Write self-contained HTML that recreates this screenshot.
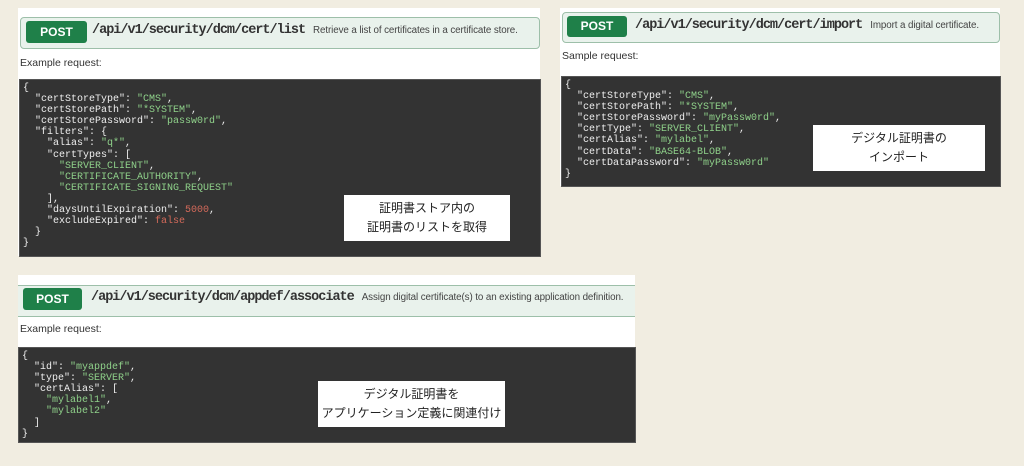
<!DOCTYPE html>
<html><head><meta charset="utf-8"><style>
body{margin:0;width:1024px;height:466px;background:#f1ede1;position:relative;overflow:hidden;font-family:"Liberation Sans","Noto Sans CJK JP",sans-serif}
.p{position:absolute;background:#fff}
.h{position:absolute;background:#e9f2ec;border:1.5px solid #9dbfa9;border-radius:4px}
.b{position:absolute;background:#1f8049;color:#fff;font-weight:bold;font-size:12px;border-radius:3px;text-align:center}
.path{position:absolute;font-family:"Liberation Mono",monospace;font-weight:bold;font-size:13.5px;letter-spacing:-1px;color:#333;white-space:nowrap}
.d{font-family:"Liberation Sans",sans-serif;font-weight:normal;font-size:9.8px;letter-spacing:-0.1px;color:#444;margin-left:8px}
.ex{position:absolute;font-size:10.5px;color:#333}
.c{position:absolute;background:#333;border:1px solid #555}
pre{margin:0;font-family:"Liberation Mono",monospace;font-size:10px;line-height:11.1px;color:#eee;padding:3px 0 0 3px}
.s{color:#8fd18a}.n{color:#d46a5a}
.l{position:absolute;background:#fff;font-size:12px;line-height:19px;text-align:center;color:#222;font-family:"Liberation Sans","Noto Sans CJK JP",sans-serif}
</style></head><body>
<div class="p" style="left:18px;top:8px;width:522px;height:248px">
 <div class="h" style="left:2px;top:9px;width:518px;height:30px"></div>
 <div class="b" style="left:8px;top:13px;width:61px;height:22px;line-height:22px">POST</div>
 <div class="path" style="left:74px;top:15px">/api/v1/security/dcm/cert/list<span class="d">Retrieve a list of certificates in a certificate store.</span></div>
 <div class="ex" style="left:2px;top:49px">Example request:</div>
 <div class="c" style="left:1px;top:71px;width:520px;height:176px"><pre>{
  "certStoreType": <span class="s">"CMS"</span>,
  "certStorePath": <span class="s">"*SYSTEM"</span>,
  "certStorePassword": <span class="s">"passw0rd"</span>,
  "filters": {
    "alias": <span class="s">"q*"</span>,
    "certTypes": [
      <span class="s">"SERVER_CLIENT"</span>,
      <span class="s">"CERTIFICATE_AUTHORITY"</span>,
      <span class="s">"CERTIFICATE_SIGNING_REQUEST"</span>
    ],
    "daysUntilExpiration": <span class="n">5000</span>,
    "excludeExpired": <span class="n">false</span>
  }
}</pre></div>
 <div class="l" style="left:326px;top:187px;width:166px;height:46px;padding-top:4px;box-sizing:border-box">証明書ストア内の<br>証明書のリストを取得</div>
</div>

<div class="p" style="left:560px;top:8px;width:440px;height:178px">
 <div class="h" style="left:2px;top:4px;width:436px;height:29px"></div>
 <div class="b" style="left:7px;top:8px;width:60px;height:21px;line-height:21px">POST</div>
 <div class="path" style="left:75px;top:10px">/api/v1/security/dcm/cert/import<span class="d">Import a digital certificate.</span></div>
 <div class="ex" style="left:2px;top:42px">Sample request:</div>
 <div class="c" style="left:1px;top:68px;width:438px;height:109px"><pre>{
  "certStoreType": <span class="s">"CMS"</span>,
  "certStorePath": <span class="s">"*SYSTEM"</span>,
  "certStorePassword": <span class="s">"myPassw0rd"</span>,
  "certType": <span class="s">"SERVER_CLIENT"</span>,
  "certAlias": <span class="s">"mylabel"</span>,
  "certData": <span class="s">"BASE64-BLOB"</span>,
  "certDataPassword": <span class="s">"myPassw0rd"</span>
}</pre></div>
 <div class="l" style="left:253px;top:117px;width:172px;height:46px;padding-top:4px;box-sizing:border-box">デジタル証明書の<br>インポート</div>
</div>

<div class="p" style="left:18px;top:275px;width:617px;height:167px">
 <div class="h" style="left:0px;top:10px;width:617px;height:30px;border-left:none;border-right:none;border-radius:0"></div>
 <div class="b" style="left:5px;top:13px;width:59px;height:22px;line-height:22px">POST</div>
 <div class="path" style="left:73px;top:15px">/api/v1/security/dcm/appdef/associate<span class="d">Assign digital certificate(s) to an existing application definition.</span></div>
 <div class="ex" style="left:2px;top:48px">Example request:</div>
 <div class="c" style="left:0px;top:72px;width:616px;height:94px"><pre>{
  "id": <span class="s">"myappdef"</span>,
  "type": <span class="s">"SERVER"</span>,
  "certAlias": [
    <span class="s">"mylabel1"</span>,
    <span class="s">"mylabel2"</span>
  ]
}</pre></div>
 <div class="l" style="left:300px;top:106px;width:187px;height:46px;padding-top:4px;box-sizing:border-box">デジタル証明書を<br>アプリケーション定義に関連付け</div>
</div>
</body></html>
